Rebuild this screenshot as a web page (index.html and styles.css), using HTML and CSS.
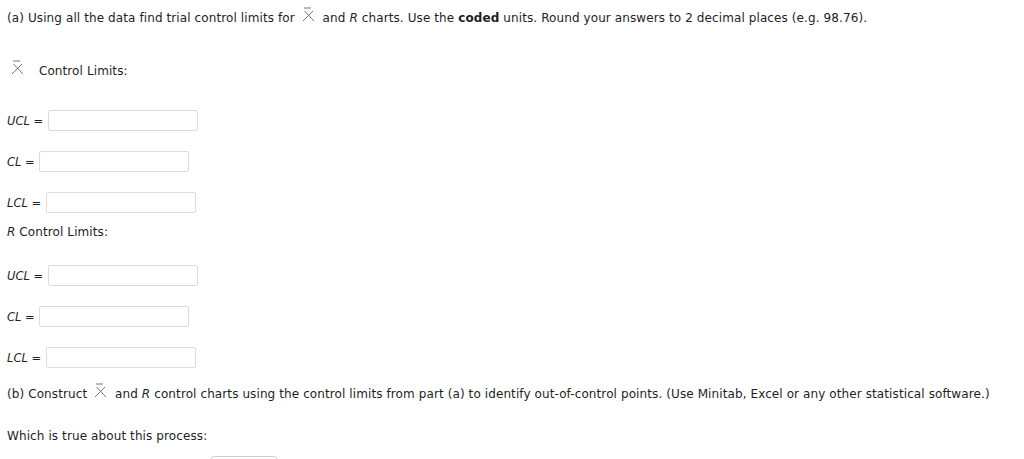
FILE: index.html
```html
<!DOCTYPE html>
<html>
<head>
<meta charset="utf-8">
<link rel="stylesheet" href="styles.css">
</head>
<body>
<div class="page">
  <p class="line line-a">(a) Using all the data find trial control limits for <svg class="xbar" viewBox="0 0 13 14" width="13" height="14"><line x1="2" y1="1" x2="9" y2="1"/><line x1="2.5" y1="4" x2="12" y2="14"/><line x1="11" y1="4" x2="1" y2="14"/></svg> and <i>R</i> charts. Use the <b>coded</b> units. Round your answers to 2 decimal places (e.g. 98.76).</p>

  <p class="line line-xcl"><svg class="xbar" viewBox="0 0 13 14" width="13" height="14"><line x1="2" y1="1" x2="9" y2="1"/><line x1="2.5" y1="4" x2="12" y2="14"/><line x1="11" y1="4" x2="1" y2="14"/></svg> Control Limits:</p>

  <div class="field field-first"><span class="lbl"><i>UCL</i> = </span><span class="box"></span></div>
  <div class="field"><span class="lbl"><i>CL</i> = </span><span class="box"></span></div>
  <div class="field"><span class="lbl"><i>LCL</i> = </span><span class="box"></span></div>

  <p class="line line-r"><i>R</i> Control Limits:</p>

  <div class="field field-first-r"><span class="lbl"><i>UCL</i> = </span><span class="box"></span></div>
  <div class="field"><span class="lbl"><i>CL</i> = </span><span class="box"></span></div>
  <div class="field"><span class="lbl"><i>LCL</i> = </span><span class="box"></span></div>

  <p class="line line-b">(b) Construct <svg class="xbar" viewBox="0 0 13 14" width="13" height="14"><line x1="2" y1="1" x2="9" y2="1"/><line x1="2.5" y1="4" x2="12" y2="14"/><line x1="11" y1="4" x2="1" y2="14"/></svg> and <i>R</i> control charts using the control limits from part (a) to identify out-of-control points. (Use Minitab, Excel or any other statistical software.)</p>

  <p class="line line-which">Which is true about this process:</p>

  <div class="select-row"><span class="select"></span></div>
</div>
</body>
</html>
```

FILE: styles.css
```css
html, body {
  margin: 0;
  padding: 0;
  background: #ffffff;
}
body {
  font-family: "DejaVu Sans", Verdana, sans-serif;
  font-size: 12px;
  color: #1e1e1e;
  overflow: hidden;
}
.page {
  padding: 0 7px;
}
.line {
  margin: 0;
  line-height: 22px;
  height: 22px;
  white-space: nowrap;
  letter-spacing: 0.1px;
}
.line-a { margin-top: 7px; }
.line-xcl { margin-top: 31px; }
.line-r { margin-top: 8px; }
.line-b { margin-top: 15px; }
.line-which { margin-top: 20px; }
.xbar {
  vertical-align: 1px;
  stroke: #666666;
  stroke-width: 0.9;
  fill: none;
  margin: 0 4px 0 3px;
}
.line-xcl .xbar { margin-left: 4px; margin-right: 11px; }
.field {
  display: flex;
  align-items: center;
  height: 21px;
  margin-top: 20px;
}
.field-first { margin-top: 28px; }
.field-first-r { margin-top: 22px; }
.lbl {
  white-space: pre;
  font-size: 11.5px;
}
.box {
  display: block;
  width: 148px;
  height: 19px;
  border: 1px solid #dcdcdc;
  border-radius: 2px;
  background: #fff;
  margin-left: 1px;
}
.select-row {
  padding-left: 203px;
  margin-top: 9px;
}
.select {
  display: block;
  width: 66px;
  height: 20px;
  border: 1px solid #cfcfcf;
  border-radius: 4px;
}
```
